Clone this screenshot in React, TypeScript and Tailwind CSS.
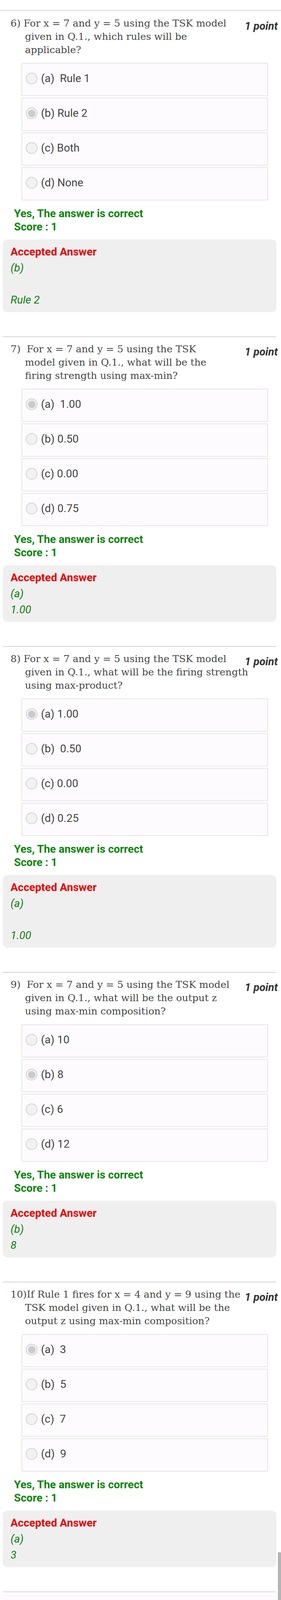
import React from "react";

type Question = {
  num: string;
  lines: string[];
  options: string[];
  selected: number;
  answer: string;
  value: string;
  blank?: boolean;
};

const questions: Question[] = [
  {
    num: "6) ",
    lines: [
      "For x = 7 and y = 5 using the TSK model",
      "given in Q.1., which rules will be",
      "applicable?",
    ],
    options: ["(a)  Rule 1", "(b) Rule 2", "(c) Both", "(d) None"],
    selected: 1,
    answer: "(b)",
    value: "Rule 2",
    blank: true,
  },
  {
    num: "7)\u00a0 ",
    lines: [
      "For x = 7 and y = 5 using the TSK",
      "model given in Q.1., what will be the",
      "firing strength using max-min?",
    ],
    options: ["(a)  1.00", "(b) 0.50", "(c) 0.00", "(d) 0.75"],
    selected: 0,
    answer: "(a)",
    value: "1.00",
  },
  {
    num: "8) ",
    lines: [
      "For x = 7 and y = 5 using the TSK model",
      "given in Q.1., what will be the firing strength",
      "using max-product?",
    ],
    options: ["(a) 1.00", "(b)  0.50", "(c) 0.00", "(d) 0.25"],
    selected: 0,
    answer: "(a)",
    value: "1.00",
    blank: true,
  },
  {
    num: "9)\u00a0 ",
    lines: [
      "For x = 7 and y = 5 using the TSK model",
      "given in Q.1., what will be the output z",
      "using max-min composition?",
    ],
    options: ["(a) 10", "(b) 8", "(c) 6", "(d) 12"],
    selected: 1,
    answer: "(b)",
    value: "8",
  },
  {
    num: "10)",
    lines: [
      "If Rule 1 fires for x = 4 and y = 9 using the",
      "TSK model given in Q.1., what will be the",
      "output z using max-min composition?",
    ],
    options: ["(a)  3", "(b)  5", "(c)  7", "(d)  9"],
    selected: 0,
    answer: "(a)",
    value: "3",
  },
];

const Radio = ({ checked }: { checked: boolean }) => (
  <span className="w-[30px] h-[30px] shrink-0 rounded-full border-2 border-[#d3d3d3] bg-[#f2f2f2] flex items-center justify-center">
    {checked && <span className="w-[19px] h-[19px] rounded-full bg-[#cbcbce]" />}
  </span>
);

const QuestionBlock = ({ q, first }: { q: Question; first: boolean }) => (
  <section className="ml-[7px] w-[701px]">
    {!first && <div className="h-[2px] bg-[#d4d4d4]" />}

    {/* question + points */}
    <div className={`${first ? "mt-[16px]" : "mt-[14px]"} flex items-start`}>
      <p className="ml-[20px] w-[600px] shrink-0 pl-[37px] -indent-[37px] font-['DejaVu_Serif',serif] text-[25px] leading-[34px] text-[#464646] whitespace-nowrap">
        {q.num}
        {q.lines.map((line, i) => (
          <React.Fragment key={i}>
            {i > 0 && <br />}
            {line}
          </React.Fragment>
        ))}
      </p>
      <span className="ml-auto mt-[9px] font-['Roboto',sans-serif] text-[28px] leading-[30px] font-bold italic text-[#333] whitespace-nowrap">
        1 point
      </span>
    </div>

    {/* options */}
    <div className="mt-[16px] ml-[48px] w-[632px] flex flex-col gap-[4px]">
      {q.options.map((opt, i) => (
        <div
          key={i}
          className="h-[85px] border-2 border-[#e7e5e7] bg-[#fdfbfd] flex items-center pl-[9px] pb-[5px]"
        >
          <Radio checked={i === q.selected} />
          <span className="ml-[9px] font-['Roboto',sans-serif] text-[28px] leading-[34px] text-[#444] whitespace-pre">
            {opt}
          </span>
        </div>
      ))}
    </div>

    {/* feedback */}
    <div className="mt-[17px] ml-[29px] font-['Roboto',sans-serif] text-[28px] leading-[34px] font-bold text-[#0a850a]">
      <p>Yes, The answer is correct</p>
      <p>Score : 1</p>
    </div>

    {/* accepted answer */}
    <div className="mt-[15px] rounded-[12px] bg-[#efefef] px-[20px] py-[11px] font-['Roboto',sans-serif] text-[28px] leading-[41px]">
      <p className="font-bold text-[#ea0000]">Accepted Answer</p>
      <p className="italic text-[#0d800d]">{q.answer}</p>
      {q.blank && <p className="h-[41px]" />}
      <p className="italic text-[#0d800d]">{q.value}</p>
    </div>

    <div className="h-[62px]" />
  </section>
);

export default function App() {
  return (
    <div className="relative w-[720px] h-[4096px] bg-white overflow-hidden">
      <div className="h-[27px] border-b-2 border-[#dedede] shadow-[0_2px_4px_rgba(0,0,0,0.08)]" />

      {questions.map((q, i) => (
        <QuestionBlock key={i} q={q} first={i === 0} />
      ))}

      <div className="ml-[7px] w-[701px] h-[2px] bg-[#d9d9d9]" />
      <div className="h-[30px] bg-[#fdfafd]" />

      {/* scrollbar thumb */}
      <div className="absolute right-0 top-[3974px] w-[8px] h-[122px] bg-[#b4b4b4]" />
    </div>
  );
}
